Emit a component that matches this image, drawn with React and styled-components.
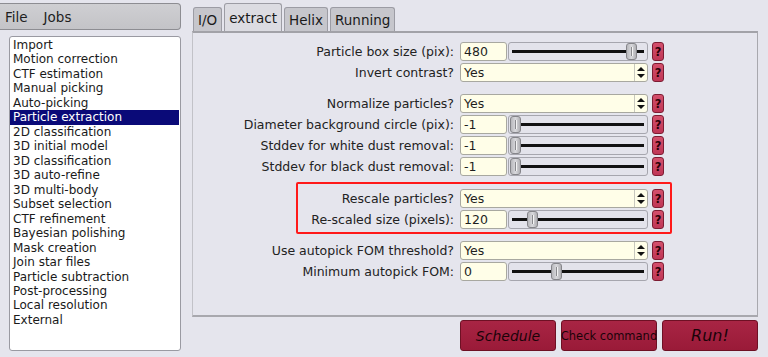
import React from 'react';
import styled, { createGlobalStyle } from 'styled-components';

const GlobalStyle = createGlobalStyle`
    html, body {
        margin: 0;
        padding: 0;
        background: #e5e5ed;
    }
    body {
        font-family: "DejaVu Sans", "Liberation Sans", sans-serif;
        color: #1e1e1e;
    }
`;

const Window = styled.div`
    width: 768px;
    height: 357px;
    display: flex;
    flex-flow: row nowrap;
    overflow: hidden;
`;

const LeftColumn = styled.div`
    width: 182px;
    display: flex;
    flex-flow: column nowrap;
    padding-top: 3px;
`;

const MenuBar = styled.div`
    height: 27px;
    width: 181px;
    box-sizing: border-box;
    background: linear-gradient(#cfcfd2, #c3c3c7);
    border: 1px solid #8d8d92;
    border-left: none;
    border-radius: 0 4px 4px 0;
    display: flex;
    align-items: center;
    font-size: 13.5px;
    padding-left: 5px;
    gap: 16px;
`;

const JobList = styled.div`
    margin: 6px 0 0 9px;
    width: 172px;
    height: 315px;
    box-sizing: border-box;
    background: #ffffff;
    border: 1px solid #9a9aa2;
    border-radius: 3px;
    padding-top: 1px;
    font-size: 12px;
`;

const JobItem = styled.div`
    height: 14.47px;
    line-height: 14.47px;
    padding-left: 3px;
    white-space: nowrap;
    margin-right: 1px;
    background: ${p => (p.selected ? '#0a0a78' : 'transparent')};
    color: ${p => (p.selected ? '#ffffff' : '#1a1a1a')};
`;

const RightColumn = styled.div`
    flex: 1;
    display: flex;
    flex-flow: column nowrap;
    padding-left: 10px;
    padding-top: 3px;
`;

const TabBar = styled.div`
    display: flex;
    flex-flow: row nowrap;
    align-items: flex-end;
    gap: 2px;
    height: 28px;
    padding-left: 1px;
`;

const Tab = styled.div`
    height: ${p => (p.active ? '28px' : '24px')};
    box-sizing: border-box;
    padding: 0 4px;
    display: flex;
    align-items: center;
    font-size: 13.5px;
    background: ${p => (p.active ? '#dcdce2' : '#c6c6cc')};
    border: 1px solid #9c9ca4;
    border-bottom: none;
    border-radius: 3px 3px 0 0;
    color: #1a1a1a;
`;

const Panel = styled.div`
    width: 566px;
    height: 286px;
    box-sizing: border-box;
    border-top: 2px solid #a2a2a8;
    border-left: 1px solid #c2c2c8;
    border-right: 1px solid #a8a8ae;
    border-bottom: 2px solid #a8a8ae;
    padding-top: 9px;
    display: flex;
    flex-flow: column nowrap;
    gap: 12px;
`;

const Group = styled.div`
    position: relative;
    display: flex;
    flex-flow: column nowrap;
    gap: 2px;
    margin-top: ${p => p.shift || 0}px;
`;

const Highlight = styled.div`
    position: absolute;
    left: 103px;
    width: 376px;
    top: -7px;
    bottom: -5px;
    box-sizing: border-box;
    border: 2px solid #ff1a1a;
    border-radius: 2px;
    pointer-events: none;
`;

const Row = styled.div`
    display: grid;
    grid-template-columns: 264px 188px 12px;
    column-gap: 3px;
    height: 19px;
    align-items: center;
`;

const Label = styled.div`
    text-align: right;
    font-size: 12.5px;
    white-space: nowrap;
    color: #222;
    padding-right: 3px;
`;

const Control = styled.div`
    display: flex;
    flex-flow: row nowrap;
    height: 19px;
`;

const TextBox = styled.div`
    width: 47px;
    height: 19px;
    box-sizing: border-box;
    background: #fffee8;
    border: 1px solid #a8a8a0;
    border-radius: 3px;
    font-size: 12.5px;
    line-height: 17px;
    padding-left: 3px;
`;

const Slider = styled.div`
    position: relative;
    flex: 1;
    margin-left: 1px;
    height: 19px;
    box-sizing: border-box;
    border: 1px solid #a6a6ae;
    border-radius: 3px;
    background: #e3e3eb;

    &::before {
        content: '';
        position: absolute;
        left: 3px;
        right: 3px;
        top: 7px;
        height: 3px;
        background: #111;
    }
`;

const Thumb = styled.div`
    position: absolute;
    top: 0px;
    width: 11px;
    height: 17px;
    box-sizing: border-box;
    background: linear-gradient(90deg, #b8b8bc, #d8d8dc 50%, #b0b0b4);
    border: 1px solid #85858a;
    border-radius: 3px;

    &::after {
        content: '';
        position: absolute;
        left: 4px;
        top: 3px;
        width: 1px;
        height: 9px;
        background: #f4f4f4;
        border-left: 1px solid #8a8a8e;
    }
`;

const Choice = styled.div`
    width: 188px;
    height: 19px;
    box-sizing: border-box;
    background: #fffee8;
    border: 1px solid #a8a8a0;
    border-radius: 3px;
    display: flex;
    flex-flow: row nowrap;
    align-items: center;
    font-size: 12.5px;
`;

const ChoiceText = styled.div`
    flex: 1;
    padding-left: 3px;
`;

const ChoiceArrow = styled.div`
    width: 12px;
    height: 17px;
    border-left: 1px solid #c8c8be;
    display: flex;
    align-items: center;
    justify-content: center;
`;

const Help = styled.div`
    width: 12px;
    height: 19px;
    box-sizing: border-box;
    background: linear-gradient(#d4506c, #bf3656);
    border: 1px solid #7d1c32;
    border-radius: 3px;
    font-size: 11.5px;
    font-weight: bold;
    color: #2a0008;
    display: flex;
    align-items: center;
    justify-content: center;
    margin-left: 1px;
`;

const ButtonRow = styled.div`
    display: flex;
    flex-flow: row nowrap;
    justify-content: flex-end;
    gap: 5px;
    padding-top: 3px;
    width: 566px;
`;

const RunButton = styled.div`
    width: ${p => p.w}px;
    height: 31px;
    box-sizing: border-box;
    background: linear-gradient(#a82544, #9a1a38);
    border: 1px solid #6e1024;
    border-radius: 3px;
    display: flex;
    align-items: center;
    justify-content: center;
    font-size: ${p => p.size || 14}px;
    font-style: ${p => (p.italic ? 'italic' : 'normal')};
    color: #1a0309;
    white-space: nowrap;
`;

const jobs = [
    'Import', 'Motion correction', 'CTF estimation', 'Manual picking', 'Auto-picking',
    'Particle extraction', '2D classification', '3D initial model', '3D classification',
    '3D auto-refine', '3D multi-body', 'Subset selection', 'CTF refinement',
    'Bayesian polishing', 'Mask creation', 'Join star files', 'Particle subtraction',
    'Post-processing', 'Local resolution', 'External',
];

const UpDown = () => (
    <svg width="8" height="11" viewBox="0 0 8 11">
        <polygon points="4,0 8,4 0,4" fill="#111" />
        <polygon points="0,7 8,7 4,11" fill="#111" />
    </svg>
);

const SliderField = ({ value, pos }) => (
    <Control>
        <TextBox>{value}</TextBox>
        <Slider>
            <Thumb style={{ left: `${pos * 127}px` }} />
        </Slider>
    </Control>
);

const ChoiceField = ({ value }) => (
    <Control>
        <Choice>
            <ChoiceText>{value}</ChoiceText>
            <ChoiceArrow><UpDown /></ChoiceArrow>
        </Choice>
    </Control>
);

const Field = ({ label, children }) => (
    <Row>
        <Label>{label}</Label>
        {children}
        <Help>?</Help>
    </Row>
);

export default function App() {
    return (
        <Window>
            <GlobalStyle />
            <LeftColumn>
                <MenuBar>
                    <span>File</span>
                    <span>Jobs</span>
                </MenuBar>
                <JobList>
                    {jobs.map(j => (
                        <JobItem key={j} selected={j === 'Particle extraction'}>{j}</JobItem>
                    ))}
                </JobList>
            </LeftColumn>
            <RightColumn>
                <TabBar>
                    <Tab>I/O</Tab>
                    <Tab active>extract</Tab>
                    <Tab>Helix</Tab>
                    <Tab>Running</Tab>
                </TabBar>
                <Panel>
                    <Group>
                        <Field label="Particle box size (pix):"><SliderField value="480" pos={0.92} /></Field>
                        <Field label="Invert contrast?"><ChoiceField value="Yes" /></Field>
                    </Group>
                    <Group>
                        <Field label="Normalize particles?"><ChoiceField value="Yes" /></Field>
                        <Field label="Diameter background circle (pix):"><SliderField value="-1" pos={0.01} /></Field>
                        <Field label="Stddev for white dust removal:"><SliderField value="-1" pos={0.01} /></Field>
                        <Field label="Stddev for black dust removal:"><SliderField value="-1" pos={0.01} /></Field>
                    </Group>
                    <Group shift={1}>
                        <Highlight />
                        <Field label="Rescale particles?"><ChoiceField value="Yes" /></Field>
                        <Field label="Re-scaled size (pixels):"><SliderField value="120" pos={0.14} /></Field>
                    </Group>
                    <Group>
                        <Field label="Use autopick FOM threshold?"><ChoiceField value="Yes" /></Field>
                        <Field label="Minimum autopick FOM:"><SliderField value="0" pos={0.33} /></Field>
                    </Group>
                </Panel>
                <ButtonRow>
                    <RunButton w={96} italic>Schedule</RunButton>
                    <RunButton w={96} size={11.5}>Check command</RunButton>
                    <RunButton w={96} italic size={16}>Run!</RunButton>
                </ButtonRow>
            </RightColumn>
        </Window>
    );
}
